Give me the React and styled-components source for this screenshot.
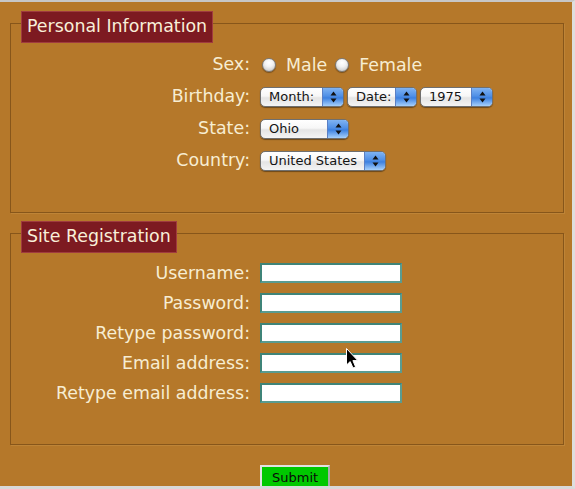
import React from "react";
import styled, { createGlobalStyle } from "styled-components";

const GlobalStyle = createGlobalStyle`
  html, body { margin: 0; padding: 0; background: #d6d6d6; }
  * { box-sizing: border-box; }
`;

const Frame = styled.div`
  position: relative;
  width: 575px;
  height: 489px;
  overflow: hidden;
  background: #b5782a;
  border-top: 2px solid #c7c7c7;
  border-right: 3px solid #dedede;
  border-bottom: 3px solid #d9d9d9;
  font-family: "DejaVu Sans", Verdana, sans-serif;
`;

const Form = styled.form`
  display: flex;
  flex-direction: column;
  padding-top: 1px;
`;

const Panel = styled.section`
  margin: ${(p) => p.$top}px 8px 0 10px;
  padding: 0 10px ${(p) => p.$bottom}px;
  border: 1px solid #87561a;
  box-shadow: 1px 1px 0 rgba(255, 220, 160, 0.12);
`;

const PanelTitle = styled.h2`
  display: block;
  width: fit-content;
  margin: -13px 0 0;
  padding: 4px 5px 5px;
  background: #7d1a21;
  border: 1px solid #a03b3f;
  color: #f8efd9;
  font-size: 17.4px;
  font-weight: normal;
  line-height: 21px;
  white-space: nowrap;
`;

const Rows = styled.div`
  display: grid;
  grid-template-columns: 229px auto;
  column-gap: 10px;
  row-gap: ${(p) => p.$gap}px;
  margin-top: ${(p) => p.$top}px;
  align-items: center;
`;

const Label = styled.label`
  color: #f7edd2;
  font-size: 17.4px;
  line-height: ${(p) => p.$h}px;
  text-align: right;
  white-space: nowrap;
`;

const Controls = styled.div`
  display: flex;
  align-items: center;
  gap: ${(p) => p.$gap || 0}px;
  height: ${(p) => p.$h}px;
`;

const RadioOption = styled.span`
  display: inline-flex;
  align-items: center;
  gap: 10px;
  margin-left: ${(p) => p.$first ? 2 : 8}px;
  color: #f7edd2;
  font-size: 17.4px;
`;

const RadioDot = styled.span`
  width: 14px;
  height: 14px;
  border-radius: 50%;
  border: 1px solid #7b7b7b;
  background: radial-gradient(circle at 50% 30%, #ffffff 0%, #f2f2f2 40%, #bdbdbd 100%);
  box-shadow: 0 1px 1px rgba(0, 0, 0, 0.35);
`;

const Select = styled.span`
  display: inline-flex;
  align-items: stretch;
  width: ${(p) => p.$w}px;
  height: 20px;
  border: 1px solid #6f6f6f;
  border-radius: 5px;
  overflow: hidden;
  background: linear-gradient(#ffffff 0%, #f7f7f7 45%, #e4e4e4 55%, #f4f4f4 100%);
  box-shadow: 0 1px 1px rgba(0, 0, 0, 0.4);
`;

const SelectText = styled.span`
  flex: 1;
  padding-left: 8px;
  color: #141414;
  font-size: 13px;
  line-height: 18px;
  white-space: nowrap;
`;

const SelectCap = styled.span`
  width: 21px;
  display: flex;
  align-items: center;
  justify-content: center;
  border-left: 1px solid #5a7fc4;
  background: linear-gradient(#7fb3f2 0%, #4f8fe6 45%, #3c80e0 55%, #a6d0fb 100%);
`;

const TextInput = styled.input`
  width: 142px;
  height: 20px;
  margin: 0;
  padding: 1px 3px;
  border: 2px solid #3f8478;
  border-right-color: #5a9c90;
  border-bottom-color: #5a9c90;
  background: #ffffff;
  font-family: inherit;
  font-size: 12px;
`;

const Actions = styled.div`
  display: flex;
  margin-top: 20px;
  padding-left: 260px;
`;

const SubmitButton = styled.button`
  height: 26px;
  padding: 2px 10px 4px;
  border: 2px solid #e2e2e2;
  border-right-color: #a9a9a9;
  border-bottom-color: #a9a9a9;
  background: #00c800;
  color: #0a0a0a;
  font-family: "DejaVu Sans", Verdana, sans-serif;
  font-size: 13px;
  line-height: 17px;
`;

const Pointer = styled.svg`
  position: absolute;
  left: 345px;
  top: 345px;
`;

function Arrows() {
  return (
    <svg width="7" height="12" viewBox="0 0 7 12">
      <path d="M3.5 0.5 L6.5 4.5 L0.5 4.5 Z" fill="#111" />
      <path d="M3.5 11.5 L6.5 7.5 L0.5 7.5 Z" fill="#111" />
    </svg>
  );
}

function AquaSelect({ width, children }) {
  return (
    <Select $w={width}>
      <SelectText>{children}</SelectText>
      <SelectCap>
        <Arrows />
      </SelectCap>
    </Select>
  );
}

const accountFields = [
  "Username:",
  "Password:",
  "Retype password:",
  "Email address:",
  "Retype email address:",
];

export default function App() {
  return (
    <>
      <GlobalStyle />
      <Frame>
        <Form onSubmit={(e) => e.preventDefault()}>
          <Panel $top={20} $bottom={41}>
            <PanelTitle>Personal Information</PanelTitle>
            <Rows $gap={11} $top={11}>
              <Label $h={21}>Sex:</Label>
              <Controls $h={21}>
                <RadioOption $first>
                  <RadioDot />
                  Male
                </RadioOption>
                <RadioOption>
                  <RadioDot />
                  Female
                </RadioOption>
              </Controls>

              <Label $h={21}>Birthday:</Label>
              <Controls $h={21} $gap={3}>
                <AquaSelect width={84}>Month:</AquaSelect>
                <AquaSelect width={70}>Date:</AquaSelect>
                <AquaSelect width={73}>1975</AquaSelect>
              </Controls>

              <Label $h={21}>State:</Label>
              <Controls $h={21}>
                <AquaSelect width={89}>Ohio</AquaSelect>
              </Controls>

              <Label $h={21}>Country:</Label>
              <Controls $h={21}>
                <AquaSelect width={126}>United States</AquaSelect>
              </Controls>
            </Rows>
          </Panel>

          <Panel $top={20} $bottom={41}>
            <PanelTitle>Site Registration</PanelTitle>
            <Rows $gap={10} $top={10}>
              {accountFields.map((f) => (
                <React.Fragment key={f}>
                  <Label $h={20}>{f}</Label>
                  <Controls $h={20}>
                    <TextInput type={f.includes("assword") ? "password" : "text"} />
                  </Controls>
                </React.Fragment>
              ))}
            </Rows>
          </Panel>

          <Actions>
            <SubmitButton type="submit">Submit</SubmitButton>
          </Actions>
        </Form>

        <Pointer width="14" height="24" viewBox="0 0 14 24">
          <path
            d="M1.5 1.5 L1.5 18 L5.2 14.6 L8 21 L10.6 19.9 L7.9 13.6 L12.8 13.6 Z"
            fill="#000"
            stroke="#fff"
            strokeWidth="1"
            strokeLinejoin="round"
          />
        </Pointer>
      </Frame>
    </>
  );
}
